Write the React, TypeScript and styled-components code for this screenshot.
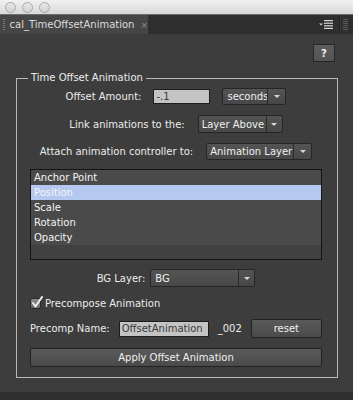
import React from 'react';
import styled, { createGlobalStyle } from 'styled-components';

const Global = createGlobalStyle`
  html, body { margin: 0; padding: 0; background: #3d3d3d; }
  body { font-family: "DejaVu Sans", Verdana, sans-serif; font-size: 10px; }
  * { box-sizing: border-box; }
`;

const Window = styled.div`
  width: 353px;
  height: 400px;
  display: flex;
  flex-direction: column;
  overflow: hidden;
  background: #3d3d3d;
`;

const TitleBar = styled.div`
  height: 15px;
  flex: none;
  display: flex;
  align-items: center;
  gap: 6px;
  padding-left: 5px;
  background: linear-gradient(#f1f1f1, #d8d8d8);
  border-bottom: 1px solid #6e6e6e;
`;

const Light = styled.span`
  width: 11px;
  height: 11px;
  border-radius: 50%;
  border: 1px solid #a9a9a9;
  background: linear-gradient(#e6e6e6, #d4d4d4);
`;

const TabBar = styled.div`
  height: 19px;
  flex: none;
  display: flex;
  align-items: stretch;
  background: #2e2e2e;
`;

const Tab = styled.div`
  width: 148px;
  display: flex;
  align-items: center;
  background: #464646;
  color: #dcdcdc;
  padding-left: 3px;
`;

const Grip = styled.span`
  width: 3px;
  height: 11px;
  margin-right: 5px;
  background: repeating-linear-gradient(#777 0 1px, transparent 1px 2px);
`;

const TabTitle = styled.span`
  white-space: nowrap;
`;

const TabClose = styled.span`
  margin-left: 6px;
  color: #8c8c8c;
  font-size: 9px;
`;

const TabTools = styled.div`
  margin-left: auto;
  display: flex;
  align-items: center;
`;

const MenuIcon = styled.svg`
  margin-right: 6px;
`;

const Divider = styled.span`
  width: 1px;
  align-self: stretch;
  background: #1f1f1f;
  box-shadow: 1px 0 0 #3a3a3a;
  margin-right: 3px;
`;

const SideGrip = styled.span`
  width: 5px;
  height: 11px;
  margin-right: 5px;
  background: repeating-linear-gradient(#5a5a5a 0 1px, transparent 1px 2px);
`;

const Main = styled.div`
  flex: 1;
  display: flex;
  flex-direction: column;
  padding: 10px 15px 0 16px;
`;

const HelpRow = styled.div`
  display: flex;
  justify-content: flex-end;
  padding-right: 3px;
`;

const HelpButton = styled.button`
  width: 22px;
  height: 18px;
  padding: 0;
  border: 1px solid #262626;
  border-radius: 1px;
  background: linear-gradient(#5e5e5e, #535353);
  color: #f0f0f0;
  font-family: "DejaVu Sans", Verdana, sans-serif;
  font-size: 10px;
  font-weight: bold;
`;

const Group = styled.fieldset`
  margin: 10px 0 0 0;
  border: 1px solid #b9b9b9;
  padding: 4px 15px 10px 13px;
  min-width: 0;
`;

const Legend = styled.legend`
  margin-left: -2px;
  padding: 0 3px;
  line-height: 12px;
  color: #ececec;
`;

const Content = styled.div`
  display: flex;
  flex-direction: column;
  gap: 10px;
`;

const Row = styled.div<{ $h: number; $gap?: number }>`
  height: ${p => p.$h}px;
  display: flex;
  align-items: center;
  justify-content: center;
  gap: ${p => p.$gap ?? 12}px;
`;

const Label = styled.span`
  color: #ececec;
  white-space: nowrap;
`;

const TextInput = styled.input<{ $w: number; $h: number }>`
  width: ${p => p.$w}px;
  height: ${p => p.$h}px;
  margin: 0;
  padding: 0 2px;
  border: 1px solid #1d1d1d;
  background: #c4c4c4;
  color: #3a3a3a;
  font-family: "DejaVu Sans", Verdana, sans-serif;
  font-size: 10px;
  outline: none;
`;

const Select = styled.div<{ $w: number }>`
  width: ${p => p.$w}px;
  height: 100%;
  display: flex;
  border: 1px solid #252525;
  border-radius: 2px;
  background: linear-gradient(#545454, #474747);
  color: #f0f0f0;
`;

const SelectValue = styled.span<{ $pad: number }>`
  flex: 1;
  display: flex;
  align-items: center;
  padding-left: ${p => p.$pad}px;
  white-space: nowrap;
  min-width: 0;
`;

const SelectArrow = styled.span<{ $w: number }>`
  width: ${p => p.$w}px;
  flex: none;
  display: flex;
  align-items: center;
  justify-content: center;
  border-left: 1px solid #2a2a2a;
  &::after {
    content: '';
    border-left: 3px solid transparent;
    border-right: 3px solid transparent;
    border-top: 3px solid #d8d8d8;
  }
`;

const ListBox = styled.div`
  height: 91px;
  margin: -1px 0;
  border: 1px solid #141414;
  background: linear-gradient(#4a4a4a 0 75px, #414141 75px);
  display: flex;
  flex-direction: column;
`;

const ListItem = styled.div<{ $selected?: boolean }>`
  height: 15px;
  line-height: 15px;
  padding-left: 3px;
  color: #f4f4f4;
  background: ${p => (p.$selected ? '#b5c8ef' : 'transparent')};
`;

const CheckRow = styled.label`
  height: 12px;
  display: flex;
  align-items: center;
  gap: 4px;
  color: #ececec;
`;

const CheckBox = styled.span`
  position: relative;
  width: 11px;
  height: 11px;
  border: 1px solid #2a2a2a;
  border-radius: 2px;
  background: linear-gradient(#8a8a8a, #686868);
`;

const CheckMark = styled.svg`
  position: absolute;
  left: 1px;
  top: -3px;
`;

const Suffix = styled.span`
  color: #ececec;
`;

const Button = styled.button<{ $w?: number }>`
  width: ${p => (p.$w ? `${p.$w}px` : '100%')};
  height: 19px;
  margin: 0;
  padding: 0;
  border: 1px solid #222;
  border-radius: 2px;
  background: linear-gradient(#5a5a5a, #4a4a4a);
  color: #f0f0f0;
  font-family: "DejaVu Sans", Verdana, sans-serif;
  font-size: 10px;
`;

const Footer = styled.div`
  height: 8px;
  flex: none;
  background: #2e2e2e;
`;

const items = ['Anchor Point', 'Position', 'Scale', 'Rotation', 'Opacity'];

function Dropdown({ value, w, arrow, pad = 4 }: { value: string; w: number; arrow: number; pad?: number }) {
  return (
    <Select $w={w}>
      <SelectValue $pad={pad}>{value}</SelectValue>
      <SelectArrow $w={arrow} />
    </Select>
  );
}

export default function App() {
  return (
    <>
      <Global />
      <Window>
        <TitleBar>
          <Light />
          <Light />
          <Light />
        </TitleBar>
        <TabBar>
          <Tab>
            <Grip />
            <TabTitle>cal_TimeOffsetAnimation</TabTitle>
            <TabClose>×</TabClose>
          </Tab>
          <TabTools>
            <MenuIcon width="14" height="9" viewBox="0 0 14 9">
              <path d="M0 3.5 L4 3.5 L2 5.5 Z" fill="#d0d0d0" />
              <rect x="5" y="0" width="9" height="1.2" fill="#d8d8d8" />
              <rect x="5" y="2.6" width="9" height="1.2" fill="#d8d8d8" />
              <rect x="5" y="5.2" width="9" height="1.2" fill="#d8d8d8" />
              <rect x="5" y="7.8" width="9" height="1.2" fill="#d8d8d8" />
            </MenuIcon>
            <Divider />
            <SideGrip />
          </TabTools>
        </TabBar>
        <Main>
          <HelpRow>
            <HelpButton>?</HelpButton>
          </HelpRow>
          <Group>
            <Legend>Time Offset Animation</Legend>
            <Content>
              <Row $h={17} $gap={12}>
                <Label>Offset Amount:</Label>
                <TextInput $w={57} $h={15} readOnly value="-.1" />
                <Dropdown value="seconds" w={64} arrow={18} />
              </Row>
              <Row $h={18} $gap={13}>
                <Label>Link animations to the:</Label>
                <Dropdown value="Layer Above" w={85} arrow={16} pad={3} />
              </Row>
              <Row $h={17} $gap={13}>
                <Label>Attach animation controller to:</Label>
                <Dropdown value="Animation Layer" w={106} arrow={18} pad={3} />
              </Row>
              <ListBox>
                {items.map(it => (
                  <ListItem key={it} $selected={it === 'Position'}>
                    {it}
                  </ListItem>
                ))}
              </ListBox>
              <Row $h={18} $gap={5}>
                <Label>BG Layer:</Label>
                <Dropdown value="BG" w={105} arrow={16} />
              </Row>
              <CheckRow>
                <CheckBox>
                  <CheckMark width="11" height="12" viewBox="0 0 11 12">
                    <path d="M1 7 L3.5 10.5 L10 1" stroke="#f0f0f0" strokeWidth="2" fill="none" strokeLinecap="round" strokeLinejoin="round" />
                  </CheckMark>
                </CheckBox>
                Precompose Animation
              </CheckRow>
              <Row $h={19} $gap={9}>
                <Label>Precomp Name:</Label>
                <TextInput $w={90} $h={16} readOnly value="OffsetAnimation" />
                <Suffix>_002</Suffix>
                <Button $w={75}>reset</Button>
              </Row>
              <Button>Apply Offset Animation</Button>
            </Content>
          </Group>
        </Main>
        <Footer />
      </Window>
    </>
  );
}
